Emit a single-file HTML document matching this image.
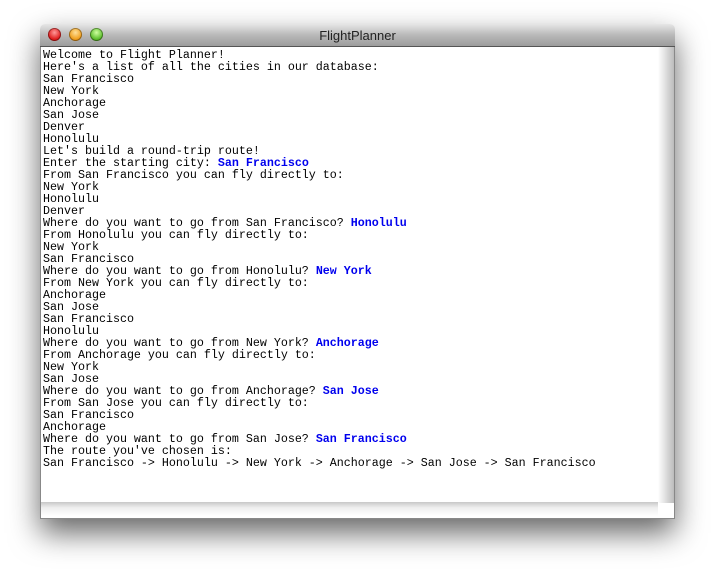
<!DOCTYPE html>
<html><head><style>
body{margin:0;width:715px;height:575px;background:#fff;position:relative;overflow:hidden;font-family:"Liberation Sans",sans-serif}
.win{position:absolute;left:40px;top:24px;width:635px;height:495px;box-shadow:0 14px 30px rgba(0,0,0,0.6);border-radius:5px 5px 0 0;background:#fff;}
.title{position:absolute;left:0;top:0;width:635px;height:22px;border-radius:5px 5px 0 0;background:linear-gradient(#e6e6e6,#b9b9b9 50%,#9c9c9c);border-bottom:1px solid #555;text-align:center;font-size:13px;line-height:23px;color:#222}
.btn{position:absolute;top:4px;width:13px;height:13px;border-radius:50%;box-shadow:inset 0 0 0 1px rgba(0,0,0,.35)}
.content{position:absolute;left:0;top:23px;width:633px;height:471px;border:1px solid #888;border-top:none;background:#fff}
.vs{position:absolute;right:0;top:0;width:16px;height:456px;background:linear-gradient(90deg,#fff,#ddd 50%,#bbb)}
.hs{position:absolute;left:0;bottom:2px;width:617px;height:14px;background:linear-gradient(#c8c8c8,#eee 40%,#fff)}
pre{margin:0;position:absolute;left:2px;top:2px;font-family:"Liberation Mono",monospace;font-size:11.67px;line-height:12px;color:#000}
b{color:#0000ee}
</style></head><body>
<div class="win">
<div class="title">FlightPlanner
<div class="btn" style="left:8px;background:radial-gradient(circle at 50% 35%,#ff9a9a,#e02020 60%,#a00)"></div>
<div class="btn" style="left:29px;background:radial-gradient(circle at 50% 35%,#ffe09a,#f0a020 60%,#b06000)"></div>
<div class="btn" style="left:50px;background:radial-gradient(circle at 50% 35%,#d0ffa0,#60c030 60%,#307000)"></div>
</div>
<div class="content">
<div class="vs"></div><div class="hs"></div>
<pre>Welcome to Flight Planner!
Here's a list of all the cities in our database:
San Francisco
New York
Anchorage
San Jose
Denver
Honolulu
Let's build a round-trip route!
Enter the starting city: <b>San Francisco</b>
From San Francisco you can fly directly to:
New York
Honolulu
Denver
Where do you want to go from San Francisco? <b>Honolulu</b>
From Honolulu you can fly directly to:
New York
San Francisco
Where do you want to go from Honolulu? <b>New York</b>
From New York you can fly directly to:
Anchorage
San Jose
San Francisco
Honolulu
Where do you want to go from New York? <b>Anchorage</b>
From Anchorage you can fly directly to:
New York
San Jose
Where do you want to go from Anchorage? <b>San Jose</b>
From San Jose you can fly directly to:
San Francisco
Anchorage
Where do you want to go from San Jose? <b>San Francisco</b>
The route you've chosen is:
San Francisco -&gt; Honolulu -&gt; New York -&gt; Anchorage -&gt; San Jose -&gt; San Francisco</pre>
</div>
</div>
</body></html>
